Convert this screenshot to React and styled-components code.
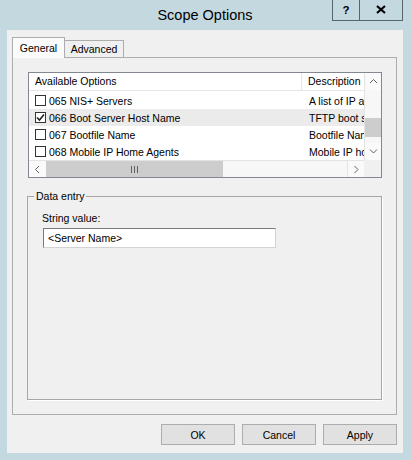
import React from 'react';
import styled, { createGlobalStyle } from 'styled-components';

const FONT = '"Liberation Sans", Arial, sans-serif';
const FRAME = '#c4d8e0';

const Global = createGlobalStyle`
  html, body { margin: 0; padding: 0; background: ${FRAME}; }
  body { font-family: ${FONT}; font-size: 10.5px; color: #000; }
  * { box-sizing: border-box; }
`;

const Window = styled.div`
  width: 411px;
  height: 460px;
  background: ${FRAME};
  padding: 0 8px 7px 7px;
  display: flex;
  flex-direction: column;
`;

const TitleBar = styled.div`
  height: 30px;
  flex: none;
  display: grid;
  grid-template-columns: 1fr auto 1fr;
  align-items: start;
`;

const Title = styled.div`
  grid-column: 2;
  font-size: 14.5px;
  line-height: 30px;
  color: #000;
  white-space: nowrap;
`;

const CaptionButtons = styled.div`
  grid-column: 3;
  justify-self: end;
  display: flex;
`;

const CaptionButton = styled.div`
  width: ${p => p.$w}px;
  height: 21px;
  border: 1px solid #56666d;
  border-top: none;
  border-right: ${p => (p.$last ? '1px solid #56666d' : 'none')};
  display: flex;
  align-items: center;
  justify-content: center;
  font-weight: bold;
  font-size: 11.5px;
  padding-bottom: 1px;
`;

const Client = styled.div`
  flex: 1;
  background: #f0f0f0;
  display: flex;
  flex-direction: column;
  padding: 7px 6px 8px 5px;
`;

const TabStrip = styled.div`
  height: 21px;
  flex: none;
  display: flex;
  align-items: flex-end;
  margin-bottom: -1px;
  position: relative;
  z-index: 1;
`;

const Tab = styled.div`
  width: ${p => p.$w}px;
  height: ${p => (p.$active ? 21 : 18)}px;
  margin-left: ${p => (p.$active ? 0 : -1)}px;
  border: 1px solid #adadad;
  border-bottom: ${p => (p.$active ? 'none' : '1px solid #adadad')};
  background: ${p => (p.$active ? '#fbfbfb' : '#f0f0f0')};
  display: flex;
  align-items: center;
  justify-content: center;
  padding-bottom: ${p => (p.$active ? 1 : 0)}px;
  position: relative;
  z-index: ${p => (p.$active ? 2 : 1)};
`;

const Panel = styled.div`
  flex: 1;
  border: 1px solid #adadad;
  background: #f0f0f0;
  padding: 14px 14px 14px 14px;
  display: flex;
  flex-direction: column;
`;

const ListView = styled.div`
  height: 106px;
  flex: none;
  margin-left: 1px;
  border: 1px solid #828790;
  background: #fff;
  display: grid;
  grid-template-columns: 1fr 17px;
  grid-template-rows: 1fr 17px;
  overflow: hidden;
`;

const ListMain = styled.div`
  min-width: 0;
  overflow: hidden;
`;

const COLS = '273px 1fr';

const Header = styled.div`
  height: 18px;
  display: grid;
  grid-template-columns: ${COLS};
  border-bottom: 1px solid #e5e5e5;
`;

const HeaderCell = styled.div`
  padding-left: ${p => p.$pl}px;
  border-right: ${p => (p.$sep ? '1px solid #e5e5e5' : 'none')};
  line-height: 17px;
  white-space: nowrap;
  overflow: hidden;
`;

const Rows = styled.div`
  padding-top: 1px;
`;

const Row = styled.div`
  height: 17px;
  display: grid;
  grid-template-columns: ${COLS};
  background: ${p => (p.$selected ? '#ebebeb' : '#fff')};
  align-items: center;
`;

const OptionCell = styled.div`
  display: flex;
  align-items: center;
  gap: 3px;
  padding-left: 6px;
  white-space: nowrap;
  overflow: hidden;
`;

const DescCell = styled.div`
  padding-left: 7px;
  white-space: nowrap;
  overflow: hidden;
`;

const CheckBox = styled.div`
  width: 11px;
  height: 11px;
  flex: none;
  border: 1px solid #333;
  background: #fff;
  display: flex;
  align-items: center;
  justify-content: center;
`;

const VScroll = styled.div`
  display: flex;
  flex-direction: column;
  background: #f7f7f7;
  border-left: 1px solid #e3e3e3;
`;

const HScroll = styled.div`
  display: flex;
  background: #f7f7f7;
  border-top: 1px solid #e3e3e3;
`;

const ArrowButton = styled.div`
  flex: none;
  width: ${p => (p.$v ? '100%' : '17px')};
  height: ${p => (p.$v ? '17px' : '100%')};
  display: flex;
  align-items: center;
  justify-content: center;
  background: #fafafa;
  border-left: ${p => (p.$bl ? '1px solid #e3e3e3' : 'none')};
`;

const Spacer = styled.div`
  flex: ${p => (p.$grow ? 1 : 'none')};
  ${p => (p.$v ? `height: ${p.$size}px;` : `width: ${p.$size}px;`)}
`;

const Thumb = styled.div`
  flex: none;
  background: #cdcdcd;
  ${p => (p.$v ? `height: ${p.$size}px; width: 100%;` : `width: ${p.$size}px; height: 100%;`)}
  display: flex;
  align-items: center;
  justify-content: center;
`;

const Corner = styled.div`
  background: #f0f0f0;
`;

const GroupBox = styled.fieldset`
  flex: 1;
  margin: 11px 0 0 0;
  padding: 0 14px;
  border: 1px solid #a6a6a6;
  box-shadow: 1px 1px 0 #fff;
  min-width: 0;
  display: flex;
  flex-direction: column;
  align-items: flex-start;
`;

const Legend = styled.legend`
  margin-left: -8px;
  padding: 0 2px;
  line-height: 14px;
`;

const FieldLabel = styled.div`
  margin-top: 8px;
  line-height: 14px;
`;

const TextBox = styled.input`
  margin: 3px 0 0 1px;
  width: 233px;
  height: 20px;
  padding: 0 4px;
  font-family: ${FONT};
  font-size: 10.5px;
  color: #000;
  background: #fff;
  border: 1px solid;
  border-color: #7a7a7a #d3d3d3 #d3d3d3 #7a7a7a;
  outline: none;
`;

const ButtonRow = styled.div`
  margin-top: 9px;
  display: flex;
  justify-content: flex-end;
  gap: 7px;
`;

const Button = styled.button`
  width: 74px;
  height: 21px;
  background: #e1e1e1;
  border: 1px solid #adadad;
  font-family: ${FONT};
  font-size: 10.5px;
  color: #000;
  padding: 0;
`;

const Chevron = ({ dir }) => {
  const paths = {
    up: 'M1 5 L4.5 1.5 L8 5',
    down: 'M1 1.5 L4.5 5 L8 1.5',
    left: 'M5 1 L1.5 4.5 L5 8',
    right: 'M1.5 1 L5 4.5 L1.5 8',
  };
  const vert = dir === 'up' || dir === 'down';
  return (
    <svg width={vert ? 9 : 7} height={vert ? 7 : 9} viewBox={vert ? '0 0 9 7' : '0 0 7 9'}>
      <path d={paths[dir]} fill="none" stroke="#606060" strokeWidth="1" />
    </svg>
  );
};

const Grip = () => (
  <svg width="7" height="7" viewBox="0 0 7 7">
    <rect x="0" y="0" width="1" height="7" fill="#606060" />
    <rect x="3" y="0" width="1" height="7" fill="#606060" />
    <rect x="6" y="0" width="1" height="7" fill="#606060" />
  </svg>
);

const Check = () => (
  <svg width="9" height="9" viewBox="0 0 9 9">
    <path d="M1 4.5 L3.5 7 L8 1.5" fill="none" stroke="#222" strokeWidth="1.6" />
  </svg>
);

const CloseIcon = () => (
  <svg width="10" height="9" viewBox="0 0 10 9">
    <path d="M1 1 L9 8 M9 1 L1 8" stroke="#000" strokeWidth="2.2" fill="none" />
  </svg>
);

const options = [
  { code: '065 NIS+ Servers', desc: 'A list of IP addresses indicating NIS+ servers', checked: false },
  { code: '066 Boot Server Host Name', desc: 'TFTP boot server host name', checked: true, selected: true },
  { code: '067 Bootfile Name', desc: 'Bootfile Name', checked: false },
  { code: '068 Mobile IP Home Agents', desc: 'Mobile IP home agents in priority order', checked: false },
];

export default function App() {
  return (
    <>
      <Global />
      <Window>
        <TitleBar>
          <Title>Scope Options</Title>
          <CaptionButtons>
            <CaptionButton $w={27}>?</CaptionButton>
            <CaptionButton $w={44} $last>
              <CloseIcon />
            </CaptionButton>
          </CaptionButtons>
        </TitleBar>
        <Client>
          <TabStrip>
            <Tab $active $w={53}>General</Tab>
            <Tab $w={60}>Advanced</Tab>
          </TabStrip>
          <Panel>
            <ListView>
              <ListMain>
                <Header>
                  <HeaderCell $pl={6} $sep>Available Options</HeaderCell>
                  <HeaderCell $pl={6}>Description</HeaderCell>
                </Header>
                <Rows>
                  {options.map(o => (
                    <Row key={o.code} $selected={o.selected}>
                      <OptionCell>
                        <CheckBox>{o.checked && <Check />}</CheckBox>
                        <span>{o.code}</span>
                      </OptionCell>
                      <DescCell>{o.desc}</DescCell>
                    </Row>
                  ))}
                </Rows>
              </ListMain>
              <VScroll>
                <ArrowButton $v><Chevron dir="up" /></ArrowButton>
                <Spacer $v $size={28} />
                <Thumb $v $size={19} />
                <Spacer $v $grow />
                <ArrowButton $v><Chevron dir="down" /></ArrowButton>
              </VScroll>
              <HScroll>
                <ArrowButton><Chevron dir="left" /></ArrowButton>
                <Thumb $size={177}><Grip /></Thumb>
                <Spacer $grow />
                <ArrowButton $bl><Chevron dir="right" /></ArrowButton>
              </HScroll>
              <Corner />
            </ListView>
            <GroupBox>
              <Legend>Data entry</Legend>
              <FieldLabel>String value:</FieldLabel>
              <TextBox readOnly defaultValue="<Server Name>" />
            </GroupBox>
          </Panel>
          <ButtonRow>
            <Button>OK</Button>
            <Button>Cancel</Button>
            <Button>Apply</Button>
          </ButtonRow>
        </Client>
      </Window>
    </>
  );
}
